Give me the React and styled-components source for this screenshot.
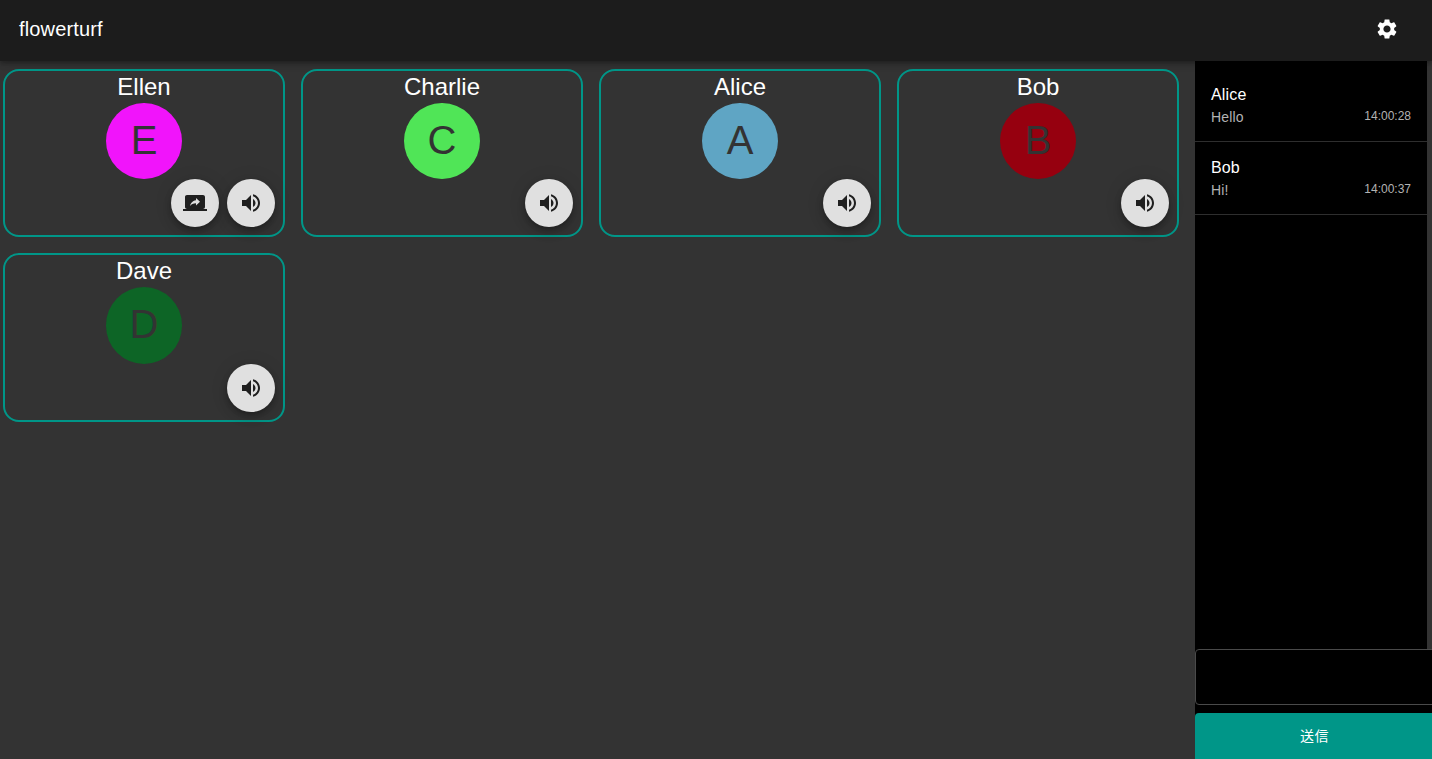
import React from 'react';
import styled, { createGlobalStyle } from 'styled-components';

const GlobalStyle = createGlobalStyle`
  html, body {
    margin: 0;
    padding: 0;
    height: 100%;
    overflow: hidden;
    background: #333333;
    font-family: "Liberation Sans", Arial, "Noto Sans CJK JP", sans-serif;
  }
  #root {
    height: 100%;
  }
`;

const Page = styled.div`
  display: flex;
  flex-direction: column;
  height: 759px;
  overflow: hidden;
`;

const Header = styled.header`
  flex: 0 0 61px;
  box-sizing: border-box;
  display: flex;
  align-items: center;
  justify-content: space-between;
  padding: 0 33px 3px 19px;
  background: #1c1c1c;
  color: #fff;
  box-shadow: 0 2px 4px -1px rgba(0, 0, 0, 0.2), 0 4px 5px rgba(0, 0, 0, 0.14), 0 1px 10px rgba(0, 0, 0, 0.12);
  position: relative;
  z-index: 1;
`;

const Title = styled.div`
  font-size: 20px;
  line-height: 32px;
  letter-spacing: 0.15px;
`;

const SettingsButton = styled.div`
  display: flex;
  color: #fff;
`;

const Body = styled.div`
  flex: 1;
  display: flex;
  min-height: 0;
`;

const Main = styled.main`
  flex: 0 0 1195px;
  box-sizing: border-box;
  display: grid;
  grid-template-columns: repeat(4, 282px);
  grid-auto-rows: 168.5px;
  gap: 16px;
  align-content: start;
  padding: 7.75px 0 0 3px;
`;

const Card = styled.section`
  box-sizing: border-box;
  border: 2px solid #009688;
  border-radius: 16px;
  display: flex;
  flex-direction: column;
  align-items: center;
  padding: 0 8px 8px;
`;

const Name = styled.div`
  color: #fff;
  font-size: 24px;
  line-height: 32px;
  height: 32px;
`;

const Avatar = styled.div`
  width: 76px;
  height: 76.5px;
  border-radius: 50%;
  background: ${(p) => p.$color};
  color: #333;
  font-size: 40px;
  padding-bottom: 2px;
  box-sizing: border-box;
  display: flex;
  align-items: center;
  justify-content: center;
  flex: none;
`;

const Actions = styled.div`
  align-self: flex-end;
  display: flex;
  gap: 8px;
`;

const Fab = styled.div`
  width: 48px;
  height: 48px;
  border-radius: 50%;
  background: #e0e0e0;
  color: #1f1f1f;
  display: flex;
  align-items: center;
  justify-content: center;
  box-shadow: 0 3px 5px -1px rgba(0, 0, 0, 0.2), 0 6px 10px rgba(0, 0, 0, 0.14), 0 1px 18px rgba(0, 0, 0, 0.12);
`;

const Side = styled.aside`
  flex: 0 0 237px;
  display: flex;
  flex-direction: column;
  background: #000;
  min-width: 0;
`;

const ChatList = styled.div`
  flex: 0 0 588px;
  box-sizing: border-box;
  border-right: 5px solid #333;
  padding-top: 8px;
`;

const Message = styled.div`
  box-sizing: border-box;
  height: 73px;
  padding: 14px 16px 0;
  border-bottom: 1px solid #2e2e2e;
  position: relative;
`;

const Sender = styled.div`
  color: #fff;
  font-size: 16px;
  line-height: 24px;
  letter-spacing: 0.15px;
`;

const Text = styled.div`
  color: #b3b3b3;
  font-size: 14px;
  line-height: 20px;
  letter-spacing: 0.15px;
`;

const Time = styled.div`
  position: absolute;
  right: 16px;
  top: 39px;
  color: #b3b3b3;
  font-size: 12px;
  line-height: 16px;
`;

const Input = styled.div`
  flex: 0 0 56px;
  box-sizing: border-box;
  width: 260px;
  border: 1px solid #4a4a4a;
  border-radius: 4px;
`;

const Send = styled.div`
  flex: 0 0 50px;
  margin-top: 8px;
  background: #009688;
  border-radius: 4px 0 0 0;
  color: #fff;
  font-size: 14px;
  letter-spacing: 0.4px;
  display: flex;
  align-items: center;
  justify-content: center;
  padding: 0 0 6px 2px;
  box-sizing: border-box;
`;

const Icon = ({ d, size = 24 }) => (
  <svg width={size} height={size} viewBox="0 0 24 24" fill="currentColor">
    <path d={d} />
  </svg>
);

const SETTINGS = 'M19.14 12.94c.04-.3.06-.61.06-.94 0-.32-.02-.64-.07-.94l2.03-1.58c.18-.14.23-.41.12-.61l-1.92-3.32c-.12-.22-.37-.29-.59-.22l-2.39.96c-.5-.38-1.03-.7-1.62-.94l-.36-2.54c-.04-.24-.24-.41-.48-.41h-3.84c-.24 0-.43.17-.47.41l-.36 2.54c-.59.24-1.13.57-1.62.94l-2.39-.96c-.22-.08-.47 0-.59.22L2.74 8.87c-.12.21-.08.47.12.61l2.03 1.58c-.05.3-.09.63-.09.94s.02.64.07.94l-2.03 1.58c-.18.14-.23.41-.12.61l1.92 3.32c.12.22.37.29.59.22l2.39-.96c.5.38 1.03.7 1.62.94l.36 2.54c.05.24.24.41.48.41h3.84c.24 0 .44-.17.47-.41l.36-2.54c.59-.24 1.13-.56 1.62-.94l2.39.96c.22.08.47 0 .59-.22l1.92-3.32c.12-.22.07-.47-.12-.61l-2.01-1.58zM12 15.6c-1.98 0-3.6-1.62-3.6-3.6s1.62-3.6 3.6-3.6 3.6 1.62 3.6 3.6-1.62 3.6-3.6 3.6z';
const VOLUME = 'M3 9v6h4l5 5V4L7 9H3zm13.5 3c0-1.77-1.02-3.29-2.5-4.03v8.05c1.48-.73 2.5-2.25 2.5-4.02zM14 3.23v2.06c2.89.86 5 3.54 5 6.71s-2.11 5.85-5 6.71v2.06c4.01-.91 7-4.49 7-8.77s-2.99-7.86-7-8.77z';
const SCREEN_SHARE = 'M20 18c1.1 0 1.99-.9 1.99-2L22 6c0-1.11-.9-2-2-2H4c-1.11 0-2 .89-2 2v10c0 1.1.89 2 2 2H0v2h24v-2h-4zm-7-3.53v-2.19c-2.78 0-4.61.85-6 2.72.56-2.67 2.11-5.33 6-5.87V7l4 3.73-4 3.74z';

const users = [
  { name: 'Ellen', color: '#f114fb', sharing: true },
  { name: 'Charlie', color: '#50e557' },
  { name: 'Alice', color: '#5fa5c4' },
  { name: 'Bob', color: '#96000f' },
  { name: 'Dave', color: '#0d6526' },
];

const messages = [
  { sender: 'Alice', text: 'Hello', time: '14:00:28' },
  { sender: 'Bob', text: 'Hi!', time: '14:00:37' },
];

export default function App() {
  return (
    <Page>
      <GlobalStyle />
      <Header>
        <Title>flowerturf</Title>
        <SettingsButton>
          <Icon d={SETTINGS} />
        </SettingsButton>
      </Header>
      <Body>
        <Main>
          {users.map((user) => (
            <Card key={user.name}>
              <Name>{user.name}</Name>
              <Avatar $color={user.color}>{user.name[0]}</Avatar>
              <Actions>
                {user.sharing && (
                  <Fab>
                    <Icon d={SCREEN_SHARE} />
                  </Fab>
                )}
                <Fab>
                  <Icon d={VOLUME} />
                </Fab>
              </Actions>
            </Card>
          ))}
        </Main>
        <Side>
          <ChatList>
            {messages.map((m) => (
              <Message key={m.time}>
                <Sender>{m.sender}</Sender>
                <Text>{m.text}</Text>
                <Time>{m.time}</Time>
              </Message>
            ))}
          </ChatList>
          <Input />
          <Send>送信</Send>
        </Side>
      </Body>
    </Page>
  );
}
